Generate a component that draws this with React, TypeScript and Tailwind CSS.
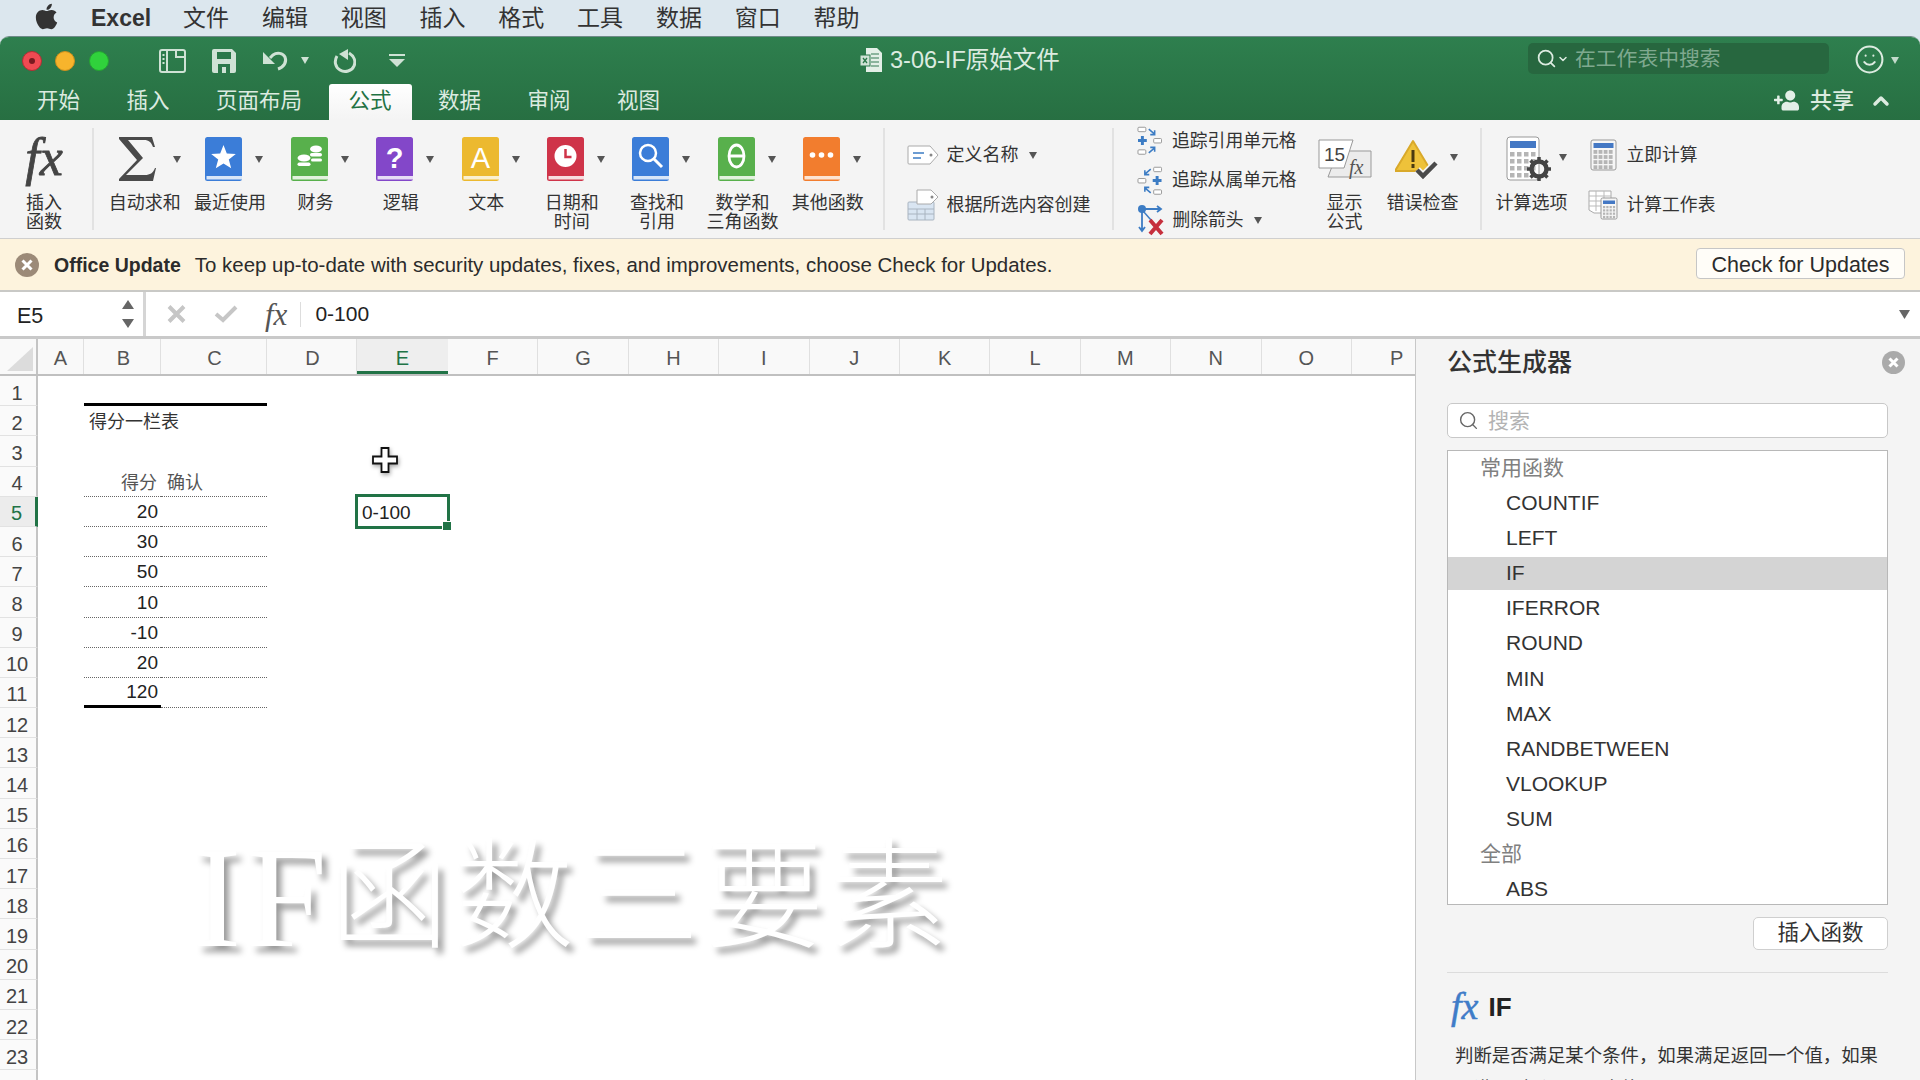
import React from 'react';
import { FaApple, FaUserPlus } from 'react-icons/fa';
import { ChevronDown, ChevronUp, Search, Smile } from 'lucide-react';

const MENU = ['文件', '编辑', '视图', '插入', '格式', '工具', '数据', '窗口', '帮助'];
const TABS = ['开始', '插入', '页面布局', '公式', '数据', '审阅', '视图'];
const COLUMNS = ['F', 'G', 'H', 'I', 'J', 'K', 'L', 'M', 'N', 'O', 'P'];
const FUNCTIONS = ['COUNTIF', 'LEFT', 'IF', 'IFERROR', 'ROUND', 'MIN', 'MAX', 'RANDBETWEEN', 'VLOOKUP', 'SUM'];
const ROW_COUNT = 23;

const Caret = ({ color = '#555' }: { color?: string }) => (
  <svg width="8" height="7" viewBox="0 0 8 7"><path d="M0 0h8L4 7z" fill={color} /></svg>
);

const Book = ({ color, page, children }: { color: string; page: string; children: React.ReactNode }) => (
  <svg width="37" height="44" viewBox="0 0 37 44">
    <rect x="0" y="0" width="37" height="44" rx="2.5" fill={color} />
    <rect x="1.5" y="39" width="35.5" height="3.5" fill={page} />
    {children}
  </svg>
);

const BOOKS: { label: string[]; color: string; page: string; glyph: React.ReactNode }[] = [
  {
    label: ['最近使用'], color: '#3b7dd8', page: '#d8e6f8',
    glyph: <path d="M18.500 8l3.300 8.500 9 .5-7 5.600 2.400 8.700-7.700-4.900-7.700 4.900 2.400-8.700-7-5.600 9-.5z" fill="#fff" />,
  },
  {
    label: ['财务'], color: '#58b04c', page: '#e2f2de',
    glyph: (
      <g fill="#fff">
        <ellipse cx="25" cy="12" rx="6" ry="3.500" />
        <rect x="19" y="16" width="12" height="3.500" rx="1.700" />
        <rect x="20" y="21.500" width="11" height="3" rx="1.500" />
        <ellipse cx="13" cy="21" rx="6.500" ry="3.500" />
        <rect x="6.500" y="25.500" width="13" height="3.500" rx="1.700" />
      </g>
    ),
  },
  {
    label: ['逻辑'], color: '#8347c9', page: '#e8dcf6',
    glyph: <text x="18.500" y="31" textAnchor="middle" fontSize="29" fontWeight="700" fill="#fff">?</text>,
  },
  {
    label: ['文本'], color: '#ecb92f', page: '#faf0d0',
    glyph: <text x="18.500" y="31" textAnchor="middle" fontSize="29" fontWeight="400" fill="#fff">A</text>,
  },
  {
    label: ['日期和', '时间'], color: '#cf3449', page: '#f8dde0',
    glyph: (
      <g>
        <circle cx="18.500" cy="19" r="11" fill="#fff" />
        <path d="M18.500 12v8h6" stroke="#cf3449" strokeWidth="2.500" fill="none" />
      </g>
    ),
  },
  {
    label: ['查找和', '引用'], color: '#3b7dd8', page: '#d8e6f8',
    glyph: (
      <g fill="none" stroke="#fff">
        <circle cx="16" cy="16" r="8" strokeWidth="2.500" />
        <path d="M22 22l8 8" strokeWidth="3" />
      </g>
    ),
  },
  {
    label: ['数学和', '三角函数'], color: '#58b04c', page: '#e2f2de',
    glyph: (
      <g fill="none" stroke="#fff" strokeWidth="2.800">
        <ellipse cx="18.500" cy="19" rx="7.500" ry="11" />
        <path d="M11 19h15" />
      </g>
    ),
  },
  {
    label: ['其他函数'], color: '#f27d2e', page: '#fde4d2',
    glyph: (
      <g fill="#fff">
        <circle cx="9.500" cy="18" r="2.800" />
        <circle cx="18.500" cy="18" r="2.800" />
        <circle cx="27.500" cy="18" r="2.800" />
      </g>
    ),
  },
];

const RibbonLabel = ({ lines }: { lines: string[] }) => (
  <div className="mt-[13px] flex flex-col items-center text-[18px] leading-[19px] text-[#333] whitespace-nowrap">
    {lines.map(l => <span key={l}>{l}</span>)}
  </div>
);

const RibbonDivider = () => <div className="mt-[8px] h-[102px] w-[2px] bg-[#e2e2e2]" />;

const TraceIcon = ({ flip }: { flip?: boolean }) => (
  <svg width="26" height="30" viewBox="0 0 26 30" className={flip ? '-scale-x-100' : ''} fill="none">
    <rect x="1" y="1" width="8" height="4.500" rx="1" fill="#fff" stroke="#999" />
    <rect x="17" y="12.500" width="8" height="4.500" rx="1" fill="#fff" stroke="#999" />
    <rect x="1" y="24" width="8" height="4.500" rx="1" fill="#fff" stroke="#999" />
    <path d="M1 14.500h9M5.500 10v9" stroke="#3c7cc4" strokeWidth="3" />
    <path d="M12 3l6 5M18 4v4.500h-4.500M12 27l6-5M18 26v-4.500h-4.500" stroke="#3c7cc4" strokeWidth="1.600" />
  </svg>
);

const RemoveArrowsIcon = () => (
  <svg width="28" height="32" viewBox="0 0 28 32" fill="none">
    <circle cx="5" cy="5" r="4" fill="#3c7cc4" />
    <path d="M5 8v18M2 23l3 4 3-4M8 5h15M20 2l4 3-4 3" stroke="#3c7cc4" strokeWidth="1.800" />
    <path d="M6 7l8 9" stroke="#3c7cc4" strokeWidth="1.500" />
    <path d="M13 16l12 14M25 16L13 30" stroke="#c62f3d" strokeWidth="4" />
  </svg>
);

const CalcGrid = ({ x, y, cols, rows, cell, gap }: { x: number; y: number; cols: number; rows: number; cell: number; gap: number }) => (
  <g fill="#b5b5b5">
    {Array.from({ length: rows * cols }).map((_, i) => (
      <rect key={i} x={x + (i % cols) * (cell + gap)} y={y + Math.floor(i / cols) * (cell + gap)} width={cell} height={cell} />
    ))}
  </g>
);

const Gear = () => (
  <g>
    <circle cx="33" cy="33" r="7.500" fill="none" stroke="#444" strokeWidth="4.500" />
    <path d="M33 21v5M33 40v5M21 33h5M40 33h5M24.500 24.500l3.500 3.500M38 38l3.500 3.500M41.500 24.500L38 28M28 38l-3.500 3.500" stroke="#444" strokeWidth="3.500" />
  </g>
);

const App: React.FC = () => {
  return (
    <div className="flex h-[1080px] w-[1920px] flex-col overflow-hidden bg-[#dce7ee] font-['Liberation_Sans','Noto_Sans_CJK_SC',sans-serif] text-[#222]">
      {/* Mac menu bar */}
      <div className="flex h-[36px] shrink-0 items-center pl-[32px] text-[23px] text-[#333]">
        <FaApple size={29} className="mb-[4px] text-[#333]" />
        <span className="ml-[30px] mr-[32px] font-bold">Excel</span>
        <div className="flex gap-[32.800px]">
          {MENU.map(m => <span key={m}>{m}</span>)}
        </div>
      </div>

      {/* Window */}
      <div className="flex min-h-0 flex-1 flex-col overflow-hidden rounded-t-[9px] border-t border-[#6f8a88] bg-white">
        <div className="flex h-[83px] shrink-0 flex-col bg-linear-to-b from-[#2e7f4e] to-[#276f42] text-[#dcebe0]">
          <div className="relative flex h-[47px] items-center">
            <div className="ml-[22px] h-[20px] w-[20px] rounded-full border border-[#b52c34] bg-[#ef4a52] flex items-center justify-center">
              <div className="h-[6px] w-[6px] rounded-full bg-[#7a1a20]" />
            </div>
            <div className="ml-[13px] h-[20px] w-[20px] rounded-full border border-[#cf8f1c] bg-[#f7b42c]" />
            <div className="ml-[14px] h-[20px] w-[20px] rounded-full border border-[#25a332] bg-[#30d23c]" />
            <svg width="27" height="24" viewBox="0 0 27 24" className="ml-[50px]" fill="none" stroke="#cfe2d5" strokeWidth="2">
              <rect x="1" y="1" width="25" height="22" rx="2" />
              <path d="M8 1v22" />
              <path d="M17 1v7h9" />
              <path d="M3.500 6h2M3.500 10h2M3.500 14h2" />
            </svg>
            <svg width="24" height="24" viewBox="0 0 24 24" className="ml-[26px]" fill="#cfe2d5">
              <path d="M2 0h18l4 4v18a2 2 0 01-2 2H2a2 2 0 01-2-2V2a2 2 0 012-2z" />
              <rect x="5" y="3" width="14" height="7" fill="#2b784a" />
              <rect x="6" y="15" width="12" height="9" fill="#2b784a" />
              <rect x="10" y="18" width="4" height="6" fill="#cfe2d5" />
            </svg>
            <svg width="27" height="20" viewBox="0 0 27 20" className="ml-[26px]" fill="none">
              <path d="M1 1v12h12z" fill="#cfe2d5" />
              <path d="M8 7l3-3c4-3 10-2 12 2 2 5-1 10-7 12" stroke="#cfe2d5" strokeWidth="3" />
            </svg>
            <div className="ml-[12px]"><Caret color="#cfe2d5" /></div>
            <svg width="23" height="24" viewBox="0 0 23 24" className="ml-[24px] -scale-x-100" fill="none">
              <path d="M7 4C2 7 0 12 2 17c2 5 9 7 14 4 5-3 6-9 3-14" stroke="#cfe2d5" strokeWidth="3" />
              <path d="M8 0v11L17 5z" fill="#cfe2d5" transform="translate(0 0)" />
            </svg>
            <svg width="16" height="13" viewBox="0 0 16 13" className="ml-[33px]" fill="#cfe2d5">
              <rect width="16" height="2" />
              <path d="M0 5h16l-8 8z" />
            </svg>

            <div className="absolute left-[860px] top-[10px] flex items-center">
              <svg width="22" height="24" viewBox="0 0 22 24">
                <path d="M6 0h11l5 5v19H6z" fill="#e3efe7" />
                <path d="M11 6h8M11 10h8M11 14h8M11 18h8" stroke="#6fa185" strokeWidth="1.500" />
                <rect x="0" y="7" width="10" height="11" fill="#cfe2d5" stroke="#2b784a" />
                <path d="M3 10l4 5M7 10l-4 5" stroke="#2b784a" strokeWidth="1.300" />
              </svg>
              <span className="ml-[8px] pt-[2px] text-[23.500px] leading-none whitespace-nowrap">3-06-IF原始文件</span>
            </div>

            <div className="absolute left-[1528px] top-[6px] flex h-[31px] w-[301px] items-center rounded-[5px] bg-[#27673f] pl-[8px]">
              <Search size={21} strokeWidth={2} className="text-[#dcebe0]" />
              <ChevronDown size={12} strokeWidth={3} className="text-[#dcebe0]" />
              <span className="ml-[6px] pt-[1px] text-[20.800px] leading-none text-[#7fa98f]">在工作表中搜索</span>
            </div>
            <Smile size={31} strokeWidth={1.600} className="absolute left-[1854px] top-[7px] text-[#dcebe0]" />
            <div className="absolute left-[1891px] top-[20px]"><Caret color="#c3dacb" /></div>
          </div>

          <div className="relative flex h-[36px] items-end gap-[6.500px] pl-[17px] text-[21.500px]">
            {TABS.map(t => (
              <div
                key={t}
                className={`flex h-[36px] items-center rounded-t-[3px] px-[20px] pb-[2px] ${t === '公式' ? 'bg-linear-to-b from-white to-[#f4f4f4] text-[#1f7244]' : ''}`}
              >
                {t}
              </div>
            ))}
            <div className="absolute left-[1774px] top-0 flex h-[36px] items-center pb-[3px]">
              <FaUserPlus size={25} className="-scale-x-100 text-[#e3efe7]" />
              <span className="ml-[11px] text-[22px] font-medium">共享</span>
              <ChevronUp size={24} strokeWidth={3.500} className="ml-[15px]" />
            </div>
          </div>
        </div>

        {/* Ribbon */}
        <div className="flex h-[119px] shrink-0 items-start border-b border-[#cfcfcf] bg-[#f4f4f4]">
          <div className="mr-[4px] flex w-[88px] flex-col items-center pt-[17px]">
            <div className="flex h-[44px] items-center pb-[3px] font-['Liberation_Serif',serif] text-[52px] italic leading-none text-[#444] [-webkit-text-stroke:0.8px_#444]">fx</div>
            <RibbonLabel lines={['插入', '函数']} />
          </div>
          <RibbonDivider />
          <div className="ml-[8px] flex">
            <div className="flex w-[85.400px] flex-col items-center pt-[17px]">
              <div className="flex h-[44px] w-full items-center pl-[17px]">
                <svg width="37" height="44" viewBox="0 0 37 44" fill="#4a4a4a">
                  <path d="M0 0h33l3 10h-2c-2-5-4-7-9-7H9l15 18L7 38h19c5 0 8-2 10-7h1l-3 13H0v-2l18-19L0 2z" />
                </svg>
                <div className="ml-[17px]"><Caret /></div>
              </div>
              <RibbonLabel lines={['自动求和']} />
            </div>
            {BOOKS.map(b => (
              <div key={b.label[0]} className="flex w-[85.400px] flex-col items-center pt-[17px]">
                <div className="flex h-[44px] w-full items-center pl-[18px]">
                  <Book color={b.color} page={b.page}>{b.glyph}</Book>
                  <div className="ml-[13px]"><Caret /></div>
                </div>
                <RibbonLabel lines={b.label} />
              </div>
            ))}
          </div>
          <div className="ml-[12px]"><RibbonDivider /></div>

          {/* defined names */}
          <div className="flex w-[227px] flex-col gap-[14px] pl-[22px] pt-[17px] text-[18px] text-[#333]">
            <div className="flex h-[36px] items-center gap-[8px]">
              <svg width="32" height="20" viewBox="0 0 32 20" fill="#fff" stroke="#aaa">
                <path d="M2 1h21l8 9-8 9H2a1 1 0 01-1-1V2a1 1 0 011-1z" />
                <path d="M6 8h11M6 13h8" stroke="#3c7cc4" strokeWidth="1.500" />
                <circle cx="24" cy="10" r="1.500" fill="#888" stroke="none" />
              </svg>
              <span>定义名称</span>
              <div className="ml-[2px]"><Caret /></div>
            </div>
            <div className="flex h-[36px] items-center gap-[8px]">
              <svg width="32" height="32" viewBox="0 0 32 32" fill="none">
                <rect x="1" y="13" width="26" height="18" rx="1" fill="#d9e5f2" stroke="#a9b4c0" />
                <path d="M1 20h26M1 25h26M10 20v11M18 20v11" stroke="#a9b4c0" />
                <path d="M10 1h14l7 7-7 7H10z" fill="#fff" stroke="#aaa" />
                <circle cx="25" cy="8" r="1.500" fill="#888" />
              </svg>
              <span className="whitespace-nowrap">根据所选内容创建</span>
            </div>
          </div>
          <RibbonDivider />

          {/* formula auditing */}
          <div className="flex w-[183px] flex-col gap-[9.500px] pl-[23px] pt-[6px] text-[17.800px] text-[#333]">
            <div className="flex h-[30px] items-center gap-[10px]">
              <TraceIcon />
              <span className="whitespace-nowrap">追踪引用单元格</span>
            </div>
            <div className="flex h-[30px] items-center gap-[10px]">
              <TraceIcon flip />
              <span className="whitespace-nowrap">追踪从属单元格</span>
            </div>
            <div className="flex h-[30px] items-center gap-[8px]">
              <RemoveArrowsIcon />
              <span className="whitespace-nowrap">删除箭头</span>
              <div className="ml-[2px]"><Caret /></div>
            </div>
          </div>
          <div className="ml-[18px] flex w-[60px] flex-col items-center pt-[17px]">
            <svg width="54" height="44" viewBox="0 0 54 44" className="shrink-0">
              <path d="M20 14h33v26H10z" fill="#ececec" stroke="#999" />
              <path d="M1 3h34L26 31H1z" fill="#fff" stroke="#999" />
              <text x="6" y="24" fontSize="19" fill="#444">15</text>
              <text x="31" y="37" fontSize="20" fontStyle="italic" fontFamily="Liberation Serif" fill="#555">fx</text>
            </svg>
            <RibbonLabel lines={['显示', '公式']} />
          </div>
          <div className="ml-[10px] flex w-[76px] flex-col items-center pt-[17px]">
            <div className="flex h-[44px] w-full items-center pl-[10px]">
              <svg width="44" height="44" viewBox="0 0 44 44">
                <path d="M18 4L36 34H0z" fill="#eec23a" stroke="#d9a92a" strokeLinejoin="round" strokeWidth="2" />
                <path d="M18 13v12M18 27v4" stroke="#4a3a10" strokeWidth="3" />
                <path d="M22 33l6 6 13-13" stroke="#f4f4f4" strokeWidth="8" fill="none" />
                <path d="M22 33l6 6 13-13" stroke="#4a4a4a" strokeWidth="4.500" fill="none" />
              </svg>
              <div className="ml-[11px] mb-[3px]"><Caret /></div>
            </div>
            <RibbonLabel lines={['错误检查']} />
          </div>
          <div className="ml-[19px]"><RibbonDivider /></div>

          {/* calculation */}
          <div className="ml-[12px] flex w-[76px] flex-col items-center pt-[16px]">
            <div className="flex h-[45px] w-full items-center pl-[12px]">
              <svg width="45" height="45" viewBox="0 0 45 45">
                <rect x="1" y="1" width="32" height="43" rx="3" fill="#fff" stroke="#999" />
                <rect x="4" y="5" width="26" height="7" fill="#4478c4" />
                <CalcGrid x={4} y={16} cols={4} rows={4} cell={4.500} gap={2.500} />
                <Gear />
              </svg>
              <div className="ml-[8px] mb-[3px]"><Caret /></div>
            </div>
            <RibbonLabel lines={['计算选项']} />
          </div>
          <div className="ml-[18px] flex flex-col gap-[14px] pt-[17px] text-[17.800px] text-[#333]">
            <div className="flex h-[36px] items-center gap-[9px]">
              <svg width="30" height="32" viewBox="0 0 30 32" className="shrink-0">
                <rect x="3" y="1" width="25" height="30" rx="2" fill="#f6f6f6" stroke="#999" />
                <rect x="5.500" y="4" width="20" height="5" fill="#4478c4" />
                <CalcGrid x={5.500} y={11} cols={4} rows={4} cell={3.800} gap={1.300} />
              </svg>
              <span className="whitespace-nowrap">立即计算</span>
            </div>
            <div className="flex h-[36px] items-center gap-[9px]">
              <svg width="30" height="30" viewBox="0 0 30 30" className="shrink-0">
                <path d="M1 1h22v22H6l-5-3z" fill="#fff" stroke="#aaa" />
                <path d="M1 6h22M1 11h12M1 16h12M8 1v20M16 1v8" stroke="#bbb" />
                <rect x="13" y="8" width="16" height="21" rx="1.500" fill="#f6f6f6" stroke="#999" />
                <rect x="15" y="10.500" width="12" height="3.500" fill="#4478c4" />
                <CalcGrid x={15} y={16} cols={4} rows={4} cell={2.200} gap={1.100} />
              </svg>
              <span className="whitespace-nowrap">计算工作表</span>
            </div>
          </div>
        </div>

        {/* Update notice */}
        <div className="relative flex h-[53px] shrink-0 items-center border-b-2 border-[#c9c9c6] bg-[#fdf3dd] pl-[15px] text-[#2b2b2b]">
          <svg width="24" height="24" viewBox="0 0 24 24" className="shrink-0">
            <circle cx="12" cy="12" r="12" fill="#9c8a78" />
            <path d="M7.500 7.500l9 9M16.500 7.500l-9 9" stroke="#fff" strokeWidth="3" />
          </svg>
          <span className="ml-[15px] pt-[2px] text-[19.500px] font-bold">Office Update</span>
          <span className="ml-[14px] pt-[2px] text-[20.450px]">To keep up-to-date with security updates, fixes, and improvements, choose Check for Updates.</span>
          <button className="absolute left-[1696px] top-[9px] flex h-[31px] w-[209px] items-center justify-center rounded-[4px] border border-[#c6c6c6] bg-[#fffdf8] pt-[3px] text-[21.500px]">
            Check for Updates
          </button>
        </div>

        {/* Formula bar */}
        <div className="flex h-[47px] shrink-0 items-stretch border-b-[3px] border-[#c9c9c9] bg-white">
          <div className="flex w-[143px] items-center justify-between pl-[17px] pr-[9px] text-[21.500px]">
            <span className="mt-[4px]">E5</span>
            <div className="flex flex-col gap-[10px]">
              <svg width="12" height="9" viewBox="0 0 12 9"><path d="M6 0l6 9H0z" fill="#666" /></svg>
              <svg width="12" height="9" viewBox="0 0 12 9"><path d="M6 9L0 0h12z" fill="#666" /></svg>
            </div>
          </div>
          <div className="w-[3px] bg-[#d5d5d5]" />
          <div className="flex flex-1 items-center pl-[21px]">
            <svg width="19" height="18" viewBox="0 0 19 18"><path d="M2 1.500l15 15M17 1.500l-15 15" stroke="#c6c6c6" strokeWidth="4" /></svg>
            <svg width="24" height="18" viewBox="0 0 24 18" className="ml-[28px]"><path d="M2 9l7 6L22 2" stroke="#c6c6c6" strokeWidth="4" fill="none" /></svg>
            <span className="ml-[27px] pr-[2px] font-['Liberation_Serif',serif] text-[31px] italic leading-none text-[#555]">fx</span>
            <div className="ml-[11px] h-[25px] w-px bg-[#ddd]" />
            <span className="ml-[14px] text-[21px]">0-100</span>
            <svg width="11" height="9" viewBox="0 0 11 9" className="ml-auto mr-[10px]"><path d="M0 0h11L5.500 9z" fill="#666" /></svg>
          </div>
        </div>

        {/* Main */}
        <div className="flex min-h-0 flex-1">
          <div className="relative w-[1415px] shrink-0 overflow-hidden">
            {/* Column headers */}
            <div className="flex h-[37px] border-b-2 border-[#c0c0c0] bg-[#f9f9f9] text-[20px] text-[#555]">
              <div className="flex w-[38px] shrink-0 items-end justify-end border-r-2 border-[#c4c4c4] pb-[3px] pr-[3px]">
                <svg width="26" height="24" viewBox="0 0 26 24"><path d="M26 0v24H0z" fill="#dcdcdc" /></svg>
              </div>
              {[['A', 46, 0], ['B', 77, 3], ['C', 106, 2], ['D', 90, 2]].map(([c, w, p]) => (
                <div key={c} className="flex shrink-0 items-center justify-center border-r border-[#e0e0e0] pt-[2px]" style={{ width: w as number, paddingLeft: p as number }}>{c}</div>
              ))}
              <div className="flex w-[91px] shrink-0 items-center justify-center border-b-[3px] border-[#217346] bg-[#eeeeee] pt-[5px] text-[#217346]">E</div>
              {COLUMNS.map(c => (
                <div key={c} className="flex w-[90.400px] shrink-0 items-center justify-center border-r border-[#e0e0e0] pt-[2px]">{c}</div>
              ))}
            </div>

            {/* Rows */}
            {Array.from({ length: ROW_COUNT }).map((_, i) => {
              const row = i + 1;
              const values: Record<number, string> = { 5: '20', 6: '30', 7: '50', 8: '10', 9: '-10', 10: '20', 11: '120' };
              const dotted = row >= 4 && row <= 11 ? 'border-b border-dotted border-[#666]' : '';
              const bCell = row === 1 || row === 11 ? 'border-b-[3px] border-black' : dotted;
              const cCell = row === 1 ? 'border-b-[3px] border-black' : dotted;
              return (
                <div key={row} className="flex h-[30.200px]">
                  <div className={`flex w-[38px] shrink-0 items-center justify-center border-b border-[#e2e2e2] pr-[2px] pt-[4px] text-[20px] ${row === 5 ? 'border-r-[3px] border-r-[#217346] bg-[#ececec] text-[#217346]' : 'border-r-2 border-r-[#c4c4c4] bg-[#fafafa] text-[#444]'}`}>
                    {row}
                  </div>
                  <div className="w-[46px] shrink-0" />
                  <div className={`relative flex w-[77px] shrink-0 items-center justify-end pr-[3px] pt-[2px] text-[19px] ${bCell}`}>
                    {row === 2 && <span className="absolute left-[5px] top-[7px] whitespace-nowrap text-[18px] leading-none text-[#333]">得分一栏表</span>}
                    {row === 4 && <span className="pr-[1px] pt-[3px] text-[18px] text-[#555]">得分</span>}
                    {values[row]}
                  </div>
                  <div className={`flex w-[106px] shrink-0 items-center pl-[6px] ${cCell}`}>
                    {row === 4 && <span className="pt-[5px] text-[18px] text-[#555]">确认</span>}
                  </div>
                  <div className="w-[90px] shrink-0" />
                  <div className="relative flex w-[91px] shrink-0 items-center pl-[5px] pt-[2px] text-[19px]">
                    {row === 5 && (
                      <>
                        <span>0-100</span>
                        <div className="absolute -left-[2px] -top-[3px] h-[35px] w-[95px] border-[3px] border-[#217346]" />
                        <div className="absolute left-[85px] top-[24px] h-[10px] w-[10px] border border-white bg-[#217346]" />
                      </>
                    )}
                  </div>
                </div>
              );
            })}
            <div className="h-[30px] w-[38px] border-r-2 border-[#c4c4c4] bg-[#fafafa]" />

            {/* Mouse cursor */}
            <svg width="26" height="26" viewBox="0 0 26 26" className="absolute left-[372px] top-[108px] drop-shadow-[1px_2px_2px_rgba(0,0,0,0.35)]">
              <path d="M9.500 1h7v8.500H25v7h-8.500V25h-7v-8.500H1v-7h8.500z" fill="#fff" stroke="#111" strokeWidth="1.800" />
            </svg>

            {/* Video caption over the sheet */}
            <div className="absolute left-[193px] top-[493px] flex items-center whitespace-nowrap text-white">
              <span className="font-['Liberation_Serif',serif] text-[145px] leading-[130px] tracking-[5px] [text-shadow:5px_6px_6px_rgba(0,0,0,0.4)]">IF</span>
              <span className="-ml-[3px] text-[120px] font-light leading-[130px] tracking-[5px] [text-shadow:5px_6px_6px_rgba(0,0,0,0.4)]">函数三要素</span>
            </div>
          </div>

          {/* Formula Builder */}
          <div className="flex w-[505px] shrink-0 flex-col border-l border-[#c8c8c8] bg-[#f4f4f4] pl-[31px] pr-[32px]">
            <div className="flex h-[46px] shrink-0 items-center justify-between">
              <span className="text-[25px] font-medium leading-none text-[#333]">公式生成器</span>
              <svg width="23" height="23" viewBox="0 0 23 23" className="-mr-[17px]">
                <circle cx="11.500" cy="11.500" r="11.500" fill="#aaa" />
                <path d="M7.500 7.500l8 8M15.500 7.500l-8 8" stroke="#fff" strokeWidth="3" />
              </svg>
            </div>
            <div className="mt-[18px] flex h-[35px] shrink-0 items-center rounded-[5px] border border-[#c8c8c8] bg-white pl-[10px] text-[21px] text-[#b3b3b3]">
              <Search size={21} strokeWidth={1.600} className="text-[#666]" />
              <span className="ml-[9px]">搜索</span>
            </div>
            <div className="mt-[12px] h-[455px] shrink-0 overflow-hidden border border-[#b8b8b8] bg-white text-[21px] text-[#333]">
              <div className="flex h-[34.300px] items-center pl-[32px] text-[#808080]">常用函数</div>
              {FUNCTIONS.map(f => (
                <div key={f} className="flex h-[35.100px] items-center">
                  <div className={`flex h-[33px] w-full items-center pl-[58px] ${f === 'IF' ? 'bg-[#d4d4d4]' : ''}`}>{f}</div>
                </div>
              ))}
              <div className="flex h-[35.100px] items-center pl-[32px] text-[#808080]">全部</div>
              <div className="flex h-[35.100px] items-center pl-[58px]">ABS</div>
            </div>
            <button className="ml-auto mt-[12px] flex h-[33px] w-[135px] shrink-0 items-center justify-center rounded-[5px] border border-[#cfcfcf] bg-white text-[21.500px] text-[#333]">
              插入函数
            </button>
            <div className="mt-[22px] h-px shrink-0 bg-[#dcdcdc]" />
            <div className="mt-[17px] flex h-[32px] shrink-0 items-center pl-[4px]">
              <span className="font-['Liberation_Serif',serif] text-[38px] italic leading-none text-[#3f7cc8] [-webkit-text-stroke:0.5px_#3f7cc8]">fx</span>
              <span className="ml-[10px] pt-[2px] text-[26px] font-bold">IF</span>
            </div>
            <div className="mt-[17px] w-[432px] pl-[8px] text-[18.400px] leading-[33px] text-[#333]">
              判断是否满足某个条件，如果满足返回一个值，如果不满足则返回另一个值。
            </div>
          </div>
        </div>
      </div>
    </div>
  );
};

export default App;
